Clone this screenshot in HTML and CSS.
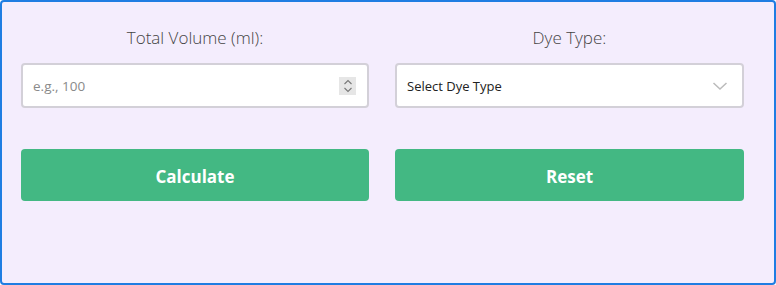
FILE: index.html
```html
<!DOCTYPE html>
<html lang="en">
<head>
  <meta charset="UTF-8">
  <title>Dye Calculator</title>
  <link rel="stylesheet" href="styles.css">
</head>
<body>

  <div class="panel">
    <div class="fields">
      <div class="field">
        <label for="volume">Total Volume (ml):</label>
        <div class="box">
          <input type="text" id="volume" placeholder="e.g., 100">
          <span class="spin">
            <svg width="10" height="16" viewBox="0 0 10 16"><path d="M1.5 6 L5 2.5 L8.5 6 M1.5 10 L5 13.5 L8.5 10" fill="none" stroke="#777" stroke-width="1.1"/></svg>
          </span>
        </div>
      </div>
      <div class="field">
        <label for="dye">Dye Type:</label>
        <div class="box">
          <span class="select-text" id="dye">Select Dye Type</span>
          <svg class="chevron" width="16" height="10" viewBox="0 0 16 10"><path d="M1.5 2 L8 8 L14.5 2" fill="none" stroke="#bbb" stroke-width="1.5"/></svg>
        </div>
      </div>
    </div>

    <div class="actions">
      <button>Calculate</button>
      <button>Reset</button>
    </div>
  </div>

</body>
</html>
```

FILE: styles.css
```css
body {
  margin: 0;
  font-family: 'Open Sans', 'Noto Sans', sans-serif;
}

.panel {
  box-sizing: border-box;
  width: 776px;
  height: 285px;
  background-color: #f4edfd;
  border: 2px solid #1f7de2;
  border-radius: 4px;
  padding: 24px 29px 0 19px;
}

.fields, .actions {
  display: grid;
  grid-template-columns: 348px 349px;
  gap: 26px;
}

.field {
  display: flex;
  flex-direction: column;
}

.field label {
  text-align: center;
  font-size: 17px;
  color: #444;
  font-weight: 300;
  line-height: 24px;
  margin-bottom: 13px;
}

.box {
  box-sizing: border-box;
  height: 45px;
  background: #fff;
  border: 2px solid #d3d0d8;
  border-radius: 4px;
  display: flex;
  align-items: center;
  padding: 0 10px;
}

.box input {
  flex: 1;
  border: none;
  outline: none;
  font-family: inherit;
  font-size: 13.5px;
  color: #222;
  padding: 0;
  background: transparent;
}

.box input::placeholder {
  color: #8a8a8a;
}

.spin {
  width: 17px;
  height: 18px;
  background: #e6e6e6;
  display: flex;
  align-items: center;
  justify-content: center;
  margin-right: 1px;
}

.select-text {
  flex: 1;
  font-size: 13px;
  color: #222;
}

.chevron {
  margin-right: 4px;
}

.actions {
  margin-top: 41px;
}

button {
  height: 52px;
  border: none;
  border-radius: 4px;
  background-color: #43b883;
  color: #fff;
  font-family: inherit;
  font-weight: bold;
  font-size: 17px;
  padding-top: 4px;
  cursor: pointer;
}
```
